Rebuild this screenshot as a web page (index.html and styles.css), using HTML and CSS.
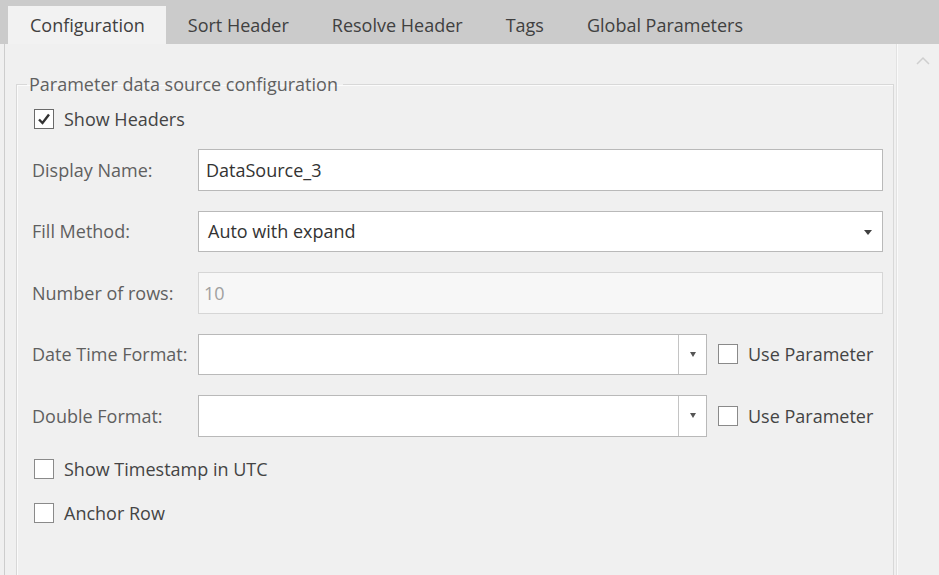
FILE: index.html
```html
<!DOCTYPE html>
<html>
<head>
<meta charset="utf-8">
<link rel="stylesheet" href="styles.css">
</head>
<body>
<div class="tabs">
  <div class="tab active">Configuration</div>
  <div class="tab">Sort Header</div>
  <div class="tab">Resolve Header</div>
  <div class="tab">Tags</div>
  <div class="tab">Global Parameters</div>
</div>
<div class="main">
  <div class="panel">
    <fieldset class="group">
      <legend>Parameter data source configuration</legend>
      <label class="check first"><span class="box checked"><svg width="14" height="14" viewBox="0 0 14 14"><path d="M2 7.5 L5.5 11 L12 2.5" fill="none" stroke="#333" stroke-width="2.4"/></svg></span>Show Headers</label>
      <div class="rows">
        <div class="row">
          <span class="lbl">Display Name:</span>
          <div class="field">DataSource_3</div>
        </div>
        <div class="row">
          <span class="lbl">Fill Method:</span>
          <div class="field select">Auto with expand<span class="arrow"></span></div>
        </div>
        <div class="row">
          <span class="lbl">Number of rows:</span>
          <div class="field disabled">10</div>
        </div>
        <div class="row">
          <span class="lbl">Date Time Format:</span>
          <div class="combo-wrap">
            <div class="field combo"><span class="combo-text"></span><span class="combo-btn"><span class="arrow small"></span></span></div>
            <label class="check inline"><span class="box"></span>Use Parameter</label>
          </div>
        </div>
        <div class="row">
          <span class="lbl">Double Format:</span>
          <div class="combo-wrap">
            <div class="field combo"><span class="combo-text"></span><span class="combo-btn"><span class="arrow small"></span></span></div>
            <label class="check inline"><span class="box"></span>Use Parameter</label>
          </div>
        </div>
      </div>
      <label class="check ts"><span class="box"></span>Show Timestamp in UTC</label>
      <label class="check anchor"><span class="box"></span>Anchor Row</label>
    </fieldset>
  </div>
  <div class="scroll">
    <svg class="chev" width="16" height="10" viewBox="0 0 16 10"><path d="M2 8 L8 2 L14 8" fill="none" stroke="#cfcfcf" stroke-width="1.5"/></svg>
  </div>
</div>
</body>
</html>
```
FILE: styles.css
```css
html, body {
  margin: 0;
  padding: 0;
}
body {
  width: 939px;
  height: 575px;
  overflow: hidden;
  background: #f0f0f0;
  font-family: "Open Sans", "Noto Sans", sans-serif;
  font-size: 18px;
  color: #5a5a5a;
}
.tabs {
  display: flex;
  align-items: flex-end;
  height: 44px;
  background: #cbcbcb;
  padding-left: 8px;
  box-sizing: border-box;
}
.tab {
  height: 38px;
  display: flex;
  align-items: center;
  padding: 0 21px 0 22px;
  color: #404040;
  box-sizing: border-box;
}
.tab.active {
  background: #f2f2f2;
}
.main {
  display: flex;
  height: 531px;
  overflow: hidden;
}
.panel {
  flex: 1;
  margin-left: 4px;
  border-left: 1px solid #cdcdcd;
  padding-left: 11px;
  padding-top: 28px;
  box-sizing: border-box;
}
.scroll {
  width: 42px;
  border-left: 1px solid #e2e2e2;
  box-shadow: inset 1px 0 0 #fafafa;
  position: relative;
}
.chev {
  position: absolute;
  left: 18px;
  top: 12px;
}
.group {
  margin: 0;
  width: 878px;
  height: 503px;
  box-sizing: border-box;
  border: 1px solid #d8d8d8;
  border-bottom: none;
  box-shadow: inset 1px 1px 0 #fbfbfb;
  padding: 0 10px 0 15px;
}
.group legend {
  margin-left: -5px;
  padding: 0 5px 0 2px;
  line-height: 24px;
  color: #606060;
}
.check {
  display: flex;
  align-items: center;
  color: #444;
}
.box {
  width: 20px;
  height: 20px;
  border: 1px solid #8a8a8a;
  background: #fff;
  box-sizing: border-box;
  display: flex;
  align-items: center;
  justify-content: center;
  margin-right: 10px;
  flex: none;
}
.box.checked {
  border-color: #6a6a6a;
}
.check.first {
  margin-left: 2px;
  margin-top: 13px;
  height: 20px;
}
.rows {
  display: grid;
  grid-template-columns: 166px 1fr;
  row-gap: 20px;
  margin-top: 20px;
}
.row {
  display: contents;
}
.lbl {
  display: flex;
  align-items: center;
  height: 41.5px;
  color: #5f5f5f;
}
.field {
  height: 41.5px;
  border: 1px solid #b9b9b9;
  background: #fff;
  box-sizing: border-box;
  display: flex;
  align-items: center;
  padding-left: 7px;
  color: #333;
  position: relative;
}
.field.select {
  padding-left: 9px;
}
.field.disabled {
  background: #f7f7f7;
  border-color: #d6d6d6;
  color: #a0a0a0;
  padding-left: 5px;
}
.arrow {
  position: absolute;
  right: 10px;
  top: 18px;
  width: 0;
  height: 0;
  border-left: 4px solid transparent;
  border-right: 4px solid transparent;
  border-top: 5px solid #404040;
}
.arrow.small {
  position: static;
  border-left-width: 3.5px;
  border-right-width: 3.5px;
  border-top-width: 5px;
  border-top-color: #555;
}
.combo-wrap {
  display: flex;
  align-items: center;
}
.field.combo {
  width: 509px;
  padding: 0;
}
.combo-text {
  flex: 1;
}
.combo-btn {
  width: 27px;
  height: 100%;
  border-left: 1px solid #c4c4c4;
  display: flex;
  align-items: center;
  justify-content: center;
}
.check.inline {
  margin-left: 11px;
  color: #444;
}
.check.ts {
  margin-left: 2px;
  margin-top: 22px;
  height: 20px;
}
.check.anchor {
  margin-left: 2px;
  margin-top: 24px;
  height: 20px;
}
```
